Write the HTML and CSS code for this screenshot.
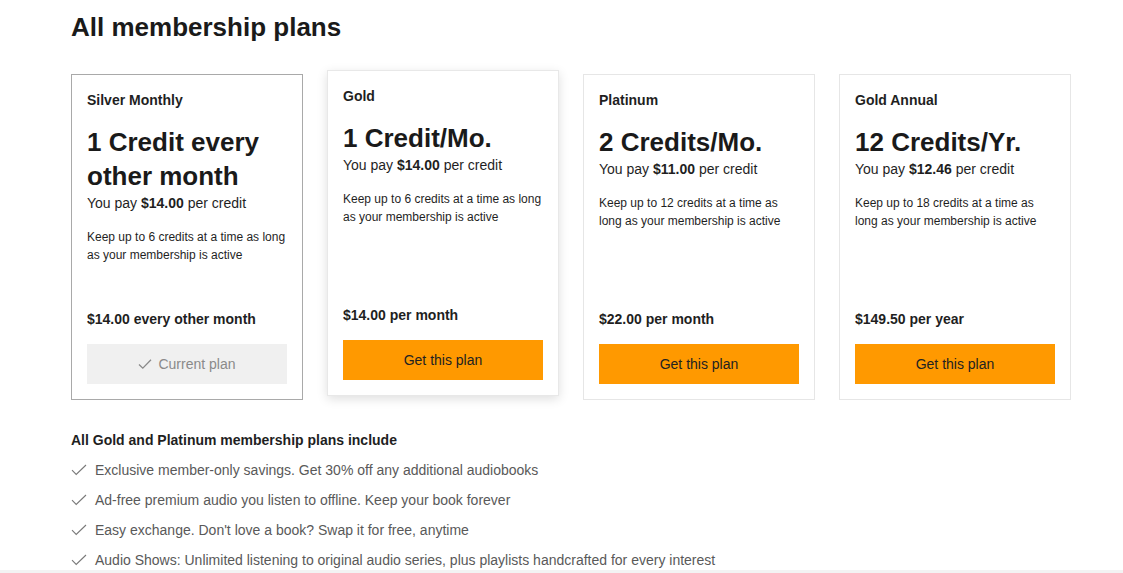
FILE: index.html
```html
<!DOCTYPE html>
<html lang="en">
<head>
<meta charset="utf-8">
<title>All membership plans</title>
<link rel="stylesheet" href="styles.css">
</head>
<body>
<main class="page">
  <h1 class="title">All membership plans</h1>
  <div class="plans">
    <section class="card card-current">
      <h2 class="plan-name">Silver Monthly</h2>
      <div class="plan-headline">1 Credit every other month</div>
      <p class="plan-pay">You pay <b>$14.00</b> per credit</p>
      <p class="plan-desc">Keep up to 6 credits at a time as long as your membership is active</p>
      <div class="plan-price">$14.00 every other month</div>
      <div class="btn btn-current">
        <svg class="btn-check" width="14" height="12" viewBox="0 0 14 12"><polyline points="1,6.5 4.8,10.2 13,1.8" fill="none" stroke="#8a8a8a" stroke-width="1.3"/></svg>
        Current plan
      </div>
    </section>
    <section class="card card-featured">
      <h2 class="plan-name">Gold</h2>
      <div class="plan-headline">1 Credit/Mo.</div>
      <p class="plan-pay">You pay <b>$14.00</b> per credit</p>
      <p class="plan-desc">Keep up to 6 credits at a time as long as your membership is active</p>
      <div class="plan-price">$14.00 per month</div>
      <button class="btn btn-primary">Get this plan</button>
    </section>
    <section class="card">
      <h2 class="plan-name">Platinum</h2>
      <div class="plan-headline">2 Credits/Mo.</div>
      <p class="plan-pay">You pay <b>$11.00</b> per credit</p>
      <p class="plan-desc">Keep up to 12 credits at a time as long as your membership is active</p>
      <div class="plan-price">$22.00 per month</div>
      <button class="btn btn-primary">Get this plan</button>
    </section>
    <section class="card">
      <h2 class="plan-name">Gold Annual</h2>
      <div class="plan-headline">12 Credits/Yr.</div>
      <p class="plan-pay">You pay <b>$12.46</b> per credit</p>
      <p class="plan-desc">Keep up to 18 credits at a time as long as your membership is active</p>
      <div class="plan-price">$149.50 per year</div>
      <button class="btn btn-primary">Get this plan</button>
    </section>
  </div>

  <section class="features">
    <h3 class="features-title">All Gold and Platinum membership plans include</h3>
    <ul class="features-list">
      <li class="feature"><svg class="feature-check" width="16" height="12" viewBox="0 0 16 12"><polyline points="1,6.2 5.2,10.4 15,1" fill="none" stroke="#7a7a7a" stroke-width="1.15"/></svg>Exclusive member-only savings. Get 30% off any additional audiobooks</li>
      <li class="feature"><svg class="feature-check" width="16" height="12" viewBox="0 0 16 12"><polyline points="1,6.2 5.2,10.4 15,1" fill="none" stroke="#7a7a7a" stroke-width="1.15"/></svg>Ad-free premium audio you listen to offline. Keep your book forever</li>
      <li class="feature"><svg class="feature-check" width="16" height="12" viewBox="0 0 16 12"><polyline points="1,6.2 5.2,10.4 15,1" fill="none" stroke="#7a7a7a" stroke-width="1.15"/></svg>Easy exchange. Don't love a book? Swap it for free, anytime</li>
      <li class="feature"><svg class="feature-check" width="16" height="12" viewBox="0 0 16 12"><polyline points="1,6.2 5.2,10.4 15,1" fill="none" stroke="#7a7a7a" stroke-width="1.15"/></svg>Audio Shows: Unlimited listening to original audio series, plus playlists handcrafted for every interest</li>
    </ul>
  </section>
</main>
<footer class="footer-strip"></footer>
</body>
</html>
```

FILE: styles.css
```css
* {
  box-sizing: border-box;
}

html, body {
  margin: 0;
  padding: 0;
  background: #ffffff;
}

body {
  font-family: "Liberation Sans", Arial, Helvetica, sans-serif;
  color: #1f1f1f;
}

.page {
  padding: 0 52px 0 71px;
}

.title {
  margin: 12px 0 0;
  font-size: 26px;
  line-height: 30px;
  font-weight: 700;
  color: #1a1a1a;
}

.plans {
  display: flex;
  gap: 24px;
  margin-top: 32px;
  width: 1000px;
}

.card {
  width: 232px;
  height: 326px;
  display: flex;
  flex-direction: column;
  padding: 15px;
  border: 1px solid #e6e6e6;
  background: #fff;
}

.card-current {
  border-color: #a9a9a9;
}

.card-featured {
  transform: translateY(-4px);
  box-shadow: 0 3px 10px rgba(0, 0, 0, 0.13);
  border-color: #e8e8e8;
}

.plan-name {
  margin: 0;
  font-size: 14px;
  line-height: 20px;
  font-weight: 700;
  color: #1f1f1f;
}

.plan-headline {
  margin-top: 15px;
  font-size: 26px;
  line-height: 34px;
  font-weight: 700;
  color: #1a1a1a;
}

.plan-pay {
  margin: 0;
  font-size: 14px;
  line-height: 20px;
  color: #1f1f1f;
}

.plan-desc {
  margin: 15px 0 0;
  font-size: 12px;
  line-height: 18px;
  color: #1f1f1f;
}

.plan-price {
  margin-top: auto;
  font-size: 14px;
  line-height: 20px;
  font-weight: 700;
  color: #1f1f1f;
}

.btn {
  margin-top: 15px;
  width: 200px;
  height: 40px;
  display: flex;
  align-items: center;
  justify-content: center;
  font-family: "Liberation Sans", Arial, Helvetica, sans-serif;
  font-size: 14px;
  border: none;
  padding: 0;
}

.btn-primary {
  background: #ff9900;
  color: #222;
}

.btn-current {
  background: #f0f0f0;
  color: #8a8a8a;
  gap: 6px;
}

.btn-check {
  display: block;
}

.features {
  margin-top: 30px;
}

.features-title {
  margin: 0;
  font-size: 14px;
  line-height: 20px;
  font-weight: 700;
  color: #1f1f1f;
}

.features-list {
  list-style: none;
  margin: 10px 0 0;
  padding: 0;
  display: flex;
  flex-direction: column;
  gap: 10px;
}

.feature {
  display: flex;
  align-items: center;
  gap: 8px;
  font-size: 14px;
  line-height: 20px;
  color: #595959;
}

.feature-check {
  flex: none;
  display: block;
}

.footer-strip {
  height: 20px;
  background: #f3f3f3;
}
```
